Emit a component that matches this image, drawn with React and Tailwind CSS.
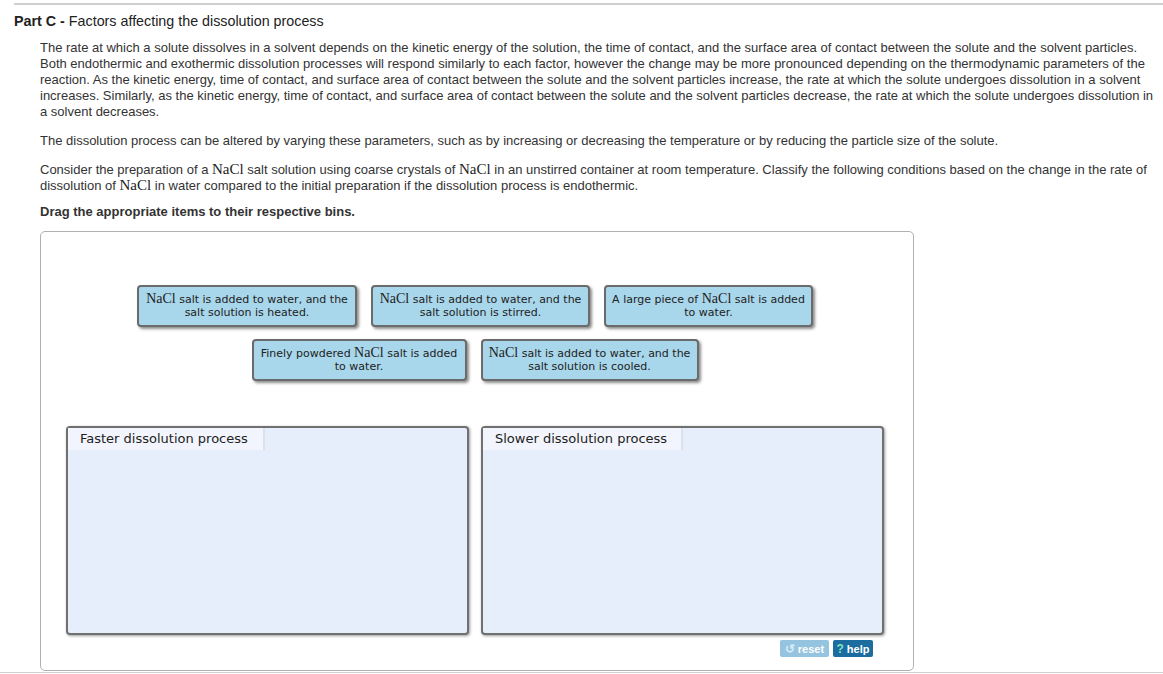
import React from 'react';

const NaCl = ({ size = 'text-[15px]' }) => (
  <span className={`font-['Liberation_Serif',serif] ${size} leading-[0] text-[#222]`}>NaCl</span>
);

const items = [
  [
    { w: 'w-[220px]', text: <><NaCl size="text-[14px]" /> salt is added to water, and the<br />salt solution is heated.</> },
    { w: 'w-[219px]', text: <><NaCl size="text-[14px]" /> salt is added to water, and the<br />salt solution is stirred.</> },
    { w: 'w-[209px]', text: <>A large piece of <NaCl size="text-[14px]" /> salt is added<br />to water.</> },
  ],
  [
    { w: 'w-[215px]', text: <>Finely powdered <NaCl size="text-[14px]" /> salt is added<br />to water.</> },
    { w: 'w-[218px]', text: <><NaCl size="text-[14px]" /> salt is added to water, and the<br />salt solution is cooled.</> },
  ],
];

function DragItem({ w, children }) {
  return (
    <div className={`${w} h-[42px] rounded-[4px] border-2 border-[#6b6b6b] bg-[#a8d6ea] shadow-[2px_2px_3px_rgba(0,0,0,0.45)] flex items-center justify-center text-center font-['DejaVu_Sans',sans-serif] text-[11px] leading-[13px] text-[#222]`}>
      <div>{children}</div>
    </div>
  );
}

function Bin({ label, tab }) {
  return (
    <div className="w-[403px] h-[209px] rounded-[4px] border-2 border-[#707070] bg-[#e7eefb] shadow-[1px_1px_3px_rgba(0,0,0,0.4)]">
      <div className={`${tab} h-[22px] bg-[#f2f5fd] border-r-2 border-[#dde2ea] pl-[12px] flex items-center font-['DejaVu_Sans',sans-serif] text-[13px] text-[#222]`}>
        {label}
      </div>
    </div>
  );
}

export default function App() {
  return (
    <div className="w-[1163px] h-[674px] overflow-hidden bg-white font-['Liberation_Sans',Arial,sans-serif] text-[#333]">
      <div className="ml-[14px] pt-[3px]">
        <div className="h-[2px] bg-[#cfcfcf]" />
      </div>

      <h2 className="ml-[14px] mt-[8px] text-[14.3px] leading-[16px] text-[#222]">
        <span className="font-bold">Part C - </span>Factors affecting the dissolution process
      </h2>

      <div className="ml-[40px] w-[1121px] mt-[11px] text-[13px] leading-[16px]">
        <p>
          The rate at which a solute dissolves in a solvent depends on the kinetic energy of the solution, the time of contact, and the surface area of contact between the solute and the solvent particles. Both endothermic and exothermic dissolution processes will respond similarly to each factor, however the change may be more pronounced depending on the thermodynamic parameters of the reaction. As the kinetic energy, time of contact, and surface area of contact between the solute and the solvent particles increase, the rate at which the solute undergoes dissolution in a solvent increases. Similarly, as the kinetic energy, time of contact, and surface area of contact between the solute and the solvent particles decrease, the rate at which the solute undergoes dissolution in a solvent decreases.
        </p>
        <p className="mt-[13px]">
          The dissolution process can be altered by varying these parameters, such as by increasing or decreasing the temperature or by reducing the particle size of the solute.
        </p>
        <p className="mt-[13px]">
          Consider the preparation of a <NaCl /> salt solution using coarse crystals of <NaCl /> in an unstirred container at room temperature. Classify the following conditions based on the change in the rate of dissolution of <NaCl /> in water compared to the initial preparation if the dissolution process is endothermic.
        </p>
        <p className="mt-[10px] font-bold">Drag the appropriate items to their respective bins.</p>

        <div className="mt-[11px] w-[874px] h-[440px] rounded-[5px] border border-[#b0b0b0] flex flex-col items-center pr-[4px]">
          <div className="mt-[53px] flex flex-col items-center gap-[12px]">
            {items.map((row, r) => (
              <div key={r} className="flex gap-[14px]">
                {row.map((it, i) => (
                  <DragItem key={i} w={it.w}>{it.text}</DragItem>
                ))}
              </div>
            ))}
          </div>

          <div className="mt-[45px] flex gap-[12px]">
            <Bin label="Faster dissolution process" tab="w-[197px]" />
            <Bin label="Slower dissolution process" tab="w-[200px]" />
          </div>

          <div className="self-end mr-[36px] mt-[5px] flex gap-[4px] font-['Liberation_Sans',Arial,sans-serif] text-[11px] font-bold leading-[16px] text-white">
            <span className="w-[49px] h-[17px] bg-[#94c4e0] rounded-[2px] flex items-center justify-center gap-[3px]">
              <span className="text-[#d8ecf8] text-[12px]">↺</span>reset
            </span>
            <span className="w-[40px] h-[17px] bg-[#1c6d9f] rounded-[2px] flex items-center justify-center gap-[3px]">
              <span className="text-[#7ee3c4] text-[12px]">?</span>help
            </span>
          </div>
        </div>
      </div>

      <div className="mt-[1px] h-[1px] bg-[#d0d0d0]" />
    </div>
  );
}
